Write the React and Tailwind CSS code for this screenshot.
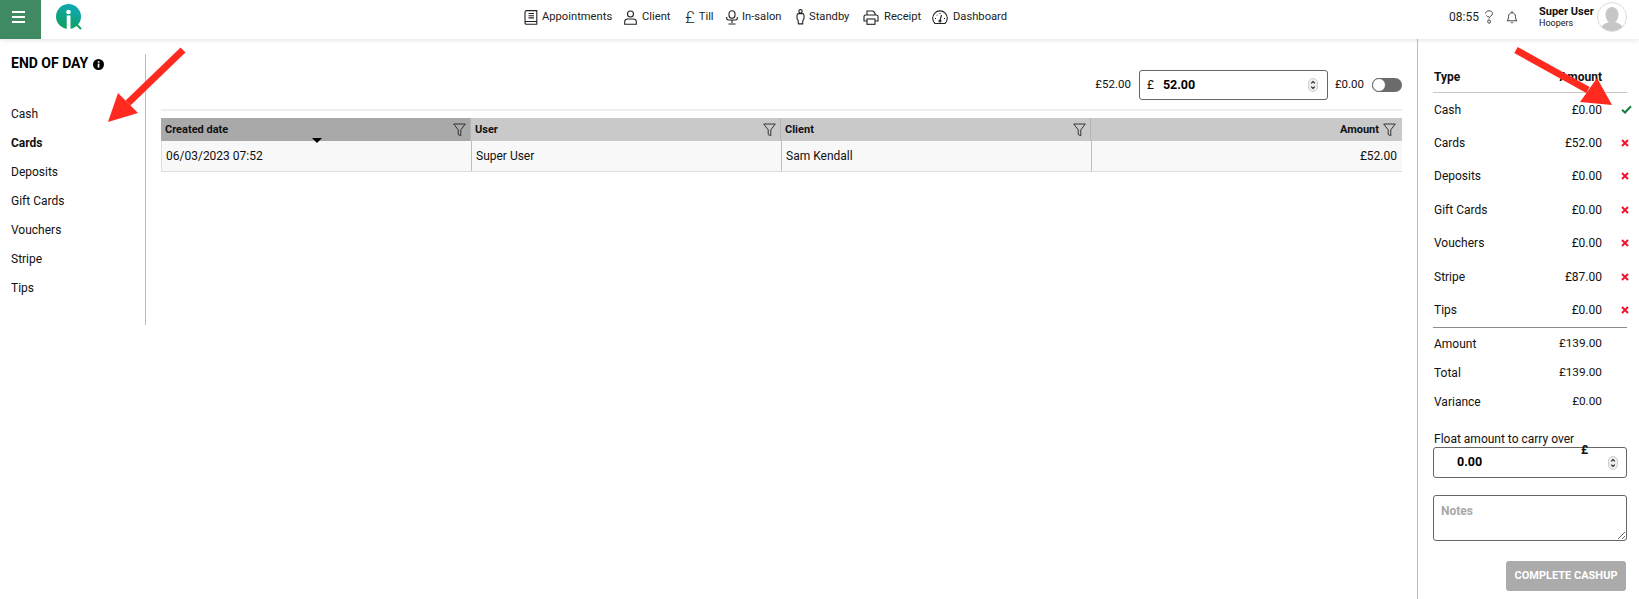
import React from "react";

const Ic = ({ w = 14, h = 14, vb = "0 0 16 16", children, className = "" }) => (
  <svg width={w} height={h} viewBox={vb} fill="none" stroke="currentColor" strokeWidth="1.1" className={`shrink-0 ${className}`}>
    {children}
  </svg>
);

const Book = () => (
  <Ic w={14} h={15} vb="0 0 14 15">
    <path d="M1 12.500V2.200A1.600 1.600 0 0 1 2.600.6h10.200v10.900H2.400A1.400 1.400 0 0 0 1 12.900a1.400 1.400 0 0 0 1.400 1.400h10.400v-2.800" />
    <path d="M4.500 3.500h5.500M4.500 5.700h5.500M4.500 7.900h5.500" />
  </Ic>
);
const UserIc = () => (
  <Ic w={13} h={15} vb="0 0 13 15">
    <circle cx="6.500" cy="4" r="3" />
    <path d="M.7 14.200v-2.400c0-1.800 1.300-2.800 3-2.800h5.600c1.700 0 3 1 3 2.800v2.400z" />
  </Ic>
);
const Seat = () => (
  <Ic w={12} h={15} vb="0 0 12 15">
    <rect x="3" y=".7" width="6" height="7.600" rx="3" />
    <path d="M.7 7v1.300c0 1 .8 1.700 1.800 1.700h7c1 0 1.800-.7 1.800-1.700V7M6 10v3M2.500 14h7" />
  </Ic>
);
const Person = () => (
  <Ic w={9} h={16} vb="0 0 9 16">
    <circle cx="4.500" cy="2.300" r="1.700" />
    <path d="M2.700 4.600h3.600c1 0 1.700.8 1.700 1.800v2.800c0 1-.5 1.500-1 1.900l-.4 3.800H2.400L2 11.100c-.5-.4-1-.9-1-1.900V6.400c0-1 .7-1.800 1.700-1.800z" />
  </Ic>
);
const Printer = () => (
  <Ic w={16} h={15} vb="0 0 16 15">
    <path d="M4 5V1h6l2 2v2M4 11H1V6.500C1 5.700 1.600 5 2.500 5h11c.9 0 1.500.7 1.500 1.500V11h-3" />
    <rect x="4" y="9" width="8" height="5.300" />
  </Ic>
);
const Gauge = () => (
  <Ic w={16} h={15} vb="0 0 16 15">
    <path d="M3 13.500A7.300 7.300 0 1 1 13 13.500z" />
    <path d="M8 10.500 9.500 5M3 8.500h1M12 8.500h1M4.800 4.800l.6.6M8 3v1" />
    <circle cx="8" cy="11" r="1" />
  </Ic>
);
const Filter = ({ className = "" }) => (
  <Ic w={13} h={14} vb="0 0 13 14" className={className}>
    <path d="M.7 1h11.600L7.800 6.800v6L5.200 11.500V6.800z" strokeWidth="0.9" />
  </Ic>
);
const Spin = () => (
  <svg width="10" height="14" viewBox="0 0 10 14" fill="none" className="shrink-0">
    <rect x=".5" y=".5" width="9" height="13" rx="4.500" fill="#ededed" stroke="#cfcfcf" />
    <path d="M3.200 5.300 5 3.500l1.800 1.800M3.200 8.700 5 10.500l1.800-1.800" stroke="#222" strokeWidth="1.100" />
  </svg>
);
const Cross = () => (
  <svg width="8" height="8" viewBox="0 0 8 8" className="shrink-0">
    <path d="M1 1l6 6M7 1 1 7" stroke="#f0142f" strokeWidth="2" />
  </svg>
);
const Check = () => (
  <svg width="11" height="9" viewBox="0 0 11 9" fill="none" className="shrink-0">
    <path d="M1 4.800 4 7.500 10 1.200" stroke="#15803d" strokeWidth="2" />
  </svg>
);

const navItems = [
  ["Appointments", <Book />, "gap-1", "w-[85px]"],
  ["Client", <UserIc />, "gap-[5px]", "w-[46px]"],
  ["Till", <span className="text-[17px] font-light leading-none w-[10px]">£</span>, "gap-1", "w-[26px]"],
  ["In-salon", <Seat />, "gap-1", "w-[55px]"],
  ["Standby", <Person />, "gap-1", "w-[52px]"],
  ["Receipt", <Printer />, "gap-[5px]", "w-[54px]"],
  ["Dashboard", <Gauge />, "gap-[5px]", "w-[73px]"],
];

const side = ["Cash", "Cards", "Deposits", "Gift Cards", "Vouchers", "Stripe", "Tips"];
const totals = [
  ["Cash", "£0.00", true],
  ["Cards", "£52.00"],
  ["Deposits", "£0.00"],
  ["Gift Cards", "£0.00"],
  ["Vouchers", "£0.00"],
  ["Stripe", "£87.00"],
  ["Tips", "£0.00"],
];

const Head = ({ label, dark, right, sort }) => (
  <div className={`relative flex-1 h-[23px] flex items-center pt-[1px] pl-[4px] border-r border-[#b5b5b5] last:border-r-0 ${dark ? "bg-[#a9a9a9]" : "bg-[#c9c9c9]"} ${right ? "justify-end gap-[4px] pr-[6px]" : "justify-between pr-[4px]"}`}>
    <span className="text-[11px] font-bold">{label}</span>
    <Filter className="text-[#222]" />
    {sort && <span className="absolute left-[151px] bottom-[-2px] w-0 h-0 border-x-[5px] border-x-transparent border-t-[5px] border-t-black" />}
  </div>
);

export default function App() {
  return (
    <div className="relative w-[1639px] h-[599px] overflow-hidden bg-white text-[#111] font-['Roboto',sans-serif] text-[12px]">
      <header className="relative z-10 h-[39px] flex items-center bg-white shadow-[0_1px_5px_rgba(0,0,0,0.12)]">
        <div className="w-[41px] h-full bg-[#3f8a63] flex flex-col items-center justify-center gap-[3px] pb-[6px] pr-[4px]">
          <span className="w-[13px] h-[2px] bg-white" />
          <span className="w-[13px] h-[2px] bg-white" />
          <span className="w-[13px] h-[2px] bg-white" />
        </div>
        <svg width="26" height="26" viewBox="0 0 26 26" className="ml-[15px] mb-[5px] shrink-0">
          <defs>
            <linearGradient id="lg" x1="0.7" y1="0" x2="0.3" y2="1">
              <stop offset="0" stopColor="#10a9bb" />
              <stop offset="1" stopColor="#0d9f5a" />
            </linearGradient>
          </defs>
          <circle cx="12.500" cy="12.500" r="12.500" fill="url(#lg)" />
          <circle cx="12.500" cy="8" r="2.300" fill="#fff" />
          <rect x="10.700" y="11.500" width="3.800" height="14" fill="#fff" />
          <path d="M20 20l5 5" stroke="#0d9f5a" strokeWidth="2" />
        </svg>
        <nav className="ml-[442px] mb-[4px] flex items-center gap-[15px] w-[482px]">
          {navItems.map(([label, icon, gap, width]) => (
            <div key={label} className={`flex items-center ${gap} ${width} shrink-0 text-[11.200px] text-[#222] whitespace-nowrap`}>
              {icon}
              <span>{label}</span>
            </div>
          ))}
        </nav>
        <div className="ml-auto mb-[6px] flex items-center pr-[12px]">
          <span className="text-[12px] text-[#222]">08:55</span>
          <Ic w={10} h={14} vb="0 0 10 14" className="ml-[5px] text-[#333]">
            <path d="M1.500 3.500C1.500 1.800 3 .8 5 .8s3.500 1 3.500 2.700c0 2.500-3.500 2.700-3.500 5M2.500 5.500c.5 1 1.500 1.300 2.500 1M3.800 11.500a1.300 1.300 0 1 0 2.500 0 1.300 1.300 0 1 0-2.500 0z" strokeWidth="0.9" />
          </Ic>
          <Ic w={12} h={14} vb="0 0 12 14" className="ml-[12px] text-[#333]">
            <path d="M1 10.800h10c-1.200-1-1.500-2.300-1.500-4.300 0-2-1.300-3.700-3.500-3.700S2.500 4.500 2.500 6.500c0 2-.3 3.300-1.500 4.300zM5 12.300a1.100 1.100 0 0 0 2 0M6 1v1.800" strokeWidth="0.9" />
          </Ic>
          <div className="ml-[21px] w-[54px] flex flex-col">
            <span className="text-[11px] font-bold leading-[13px] whitespace-nowrap">Super User</span>
            <span className="text-[9px] leading-[11px]">Hoopers</span>
          </div>
          <div className="ml-[4px] w-[30px] h-[30px] rounded-full border border-[#ddd] overflow-hidden bg-white">
            <svg width="28" height="28" viewBox="0 0 28 28">
              <ellipse cx="14" cy="12" rx="6.500" ry="8" fill="#c6c6c6" />
              <path d="M2 28c0-6 6-8 9-9h6c3 1 9 3 9 9z" fill="#c6c6c6" />
            </svg>
          </div>
        </div>
      </header>

      <div className="flex h-[560px]">
        <aside className="w-[146px] h-[271px] mt-[15px] border-r border-[#bdbdbd] pl-[11px] shrink-0">
          <div className="flex items-center gap-[5px] h-[18px]">
            <span className="text-[14px] font-bold text-black">END OF DAY</span>
            <svg width="11" height="11" viewBox="0 0 11 11" className="mt-[2px]">
              <circle cx="5.500" cy="5.500" r="5.500" fill="#000" />
              <rect x="4.700" y="4.600" width="1.700" height="4" fill="#fff" />
              <rect x="4.700" y="2.200" width="1.700" height="1.500" fill="#fff" />
            </svg>
          </div>
          <ul className="mt-[27px] flex flex-col">
            {side.map((s) => (
              <li key={s} className={`h-[29px] flex items-center text-[12px] ${s === "Cards" ? "font-bold" : ""}`}>{s}</li>
            ))}
          </ul>
        </aside>

        <main className="w-[1241px] ml-[15px] shrink-0 flex flex-col">
          <div className="flex items-center justify-end mt-[31px] h-[30px] text-[11.500px]">
            <span>£52.00</span>
            <div className="ml-[8px] w-[189px] h-[30px] border border-[#666] rounded-[3px] flex items-center pl-[7px] pr-[9px]">
              <span className="text-[12px]">£</span>
              <span className="ml-[9px] text-[12.500px] font-bold text-black">52.00</span>
              <span className="ml-auto"><Spin /></span>
            </div>
            <span className="ml-[7px]">£0.00</span>
            <div className="ml-[8px] w-[30px] h-[14px] rounded-full bg-[#6b6b6b] relative">
              <span className="absolute left-0 top-0 w-[14px] h-[14px] rounded-full bg-white border border-[#6b6b6b]" />
            </div>
          </div>
          <div className="mt-[9px] h-[2px] bg-[#eeeeee]" />
          <div className="mt-[7px]">
            <div className="flex">
              <Head label="Created date" dark sort />
              <Head label="User" />
              <Head label="Client" />
              <Head label="Amount" right />
            </div>
            <div className="flex h-[31px] bg-[#f8f8f8] border-b border-[#dedede] border-l border-l-[#dedede] text-[12px]">
              <div className="flex-1 flex items-center pl-[4px] border-r border-[#bdbdbd]">06/03/2023 07:52</div>
              <div className="flex-1 flex items-center pl-[4px] border-r border-[#bdbdbd]">Super User</div>
              <div className="flex-1 flex items-center pl-[4px] border-r border-[#bdbdbd]">Sam Kendall</div>
              <div className="flex-1 flex items-center justify-end pr-[5px]">£52.00</div>
            </div>
          </div>
        </main>

        <aside className="ml-[15px] w-[222px] shrink-0 border-l border-[#bdbdbd] pl-[15px] text-[12px] flex flex-col">
          <div className="w-[194px] h-[30px] mt-[24px] flex items-center border-b border-[#c8c8c8] font-bold pb-[1px]">
            <span className="text-[12px] pl-px">Type</span>
            <span className="ml-auto mr-[25px] text-[12px]">Amount</span>
          </div>
          <div className="w-[194px] border-b border-[#8c8c8c] h-[235px] flex flex-col">
            {totals.map(([t, a, ok]) => (
              <div key={t} className="h-[33.400px] flex items-center">
                <span className="pl-px">{t}</span>
                <span className="ml-auto">{a}</span>
                <span className="w-[25px] shrink-0 pl-[19px] flex items-center">{ok ? <Check /> : <Cross />}</span>
              </div>
            ))}
          </div>
          <div className="w-[169px] flex flex-col text-[11.800px]">
            <div className="h-[29px] mt-[1px] flex items-center justify-between"><span className="text-[12px] pl-px">Amount</span><span>£139.00</span></div>
            <div className="h-[29px] flex items-center justify-between"><span className="text-[12px] pl-px">Total</span><span>£139.00</span></div>
            <div className="h-[30px] flex items-center justify-between"><span className="text-[12px] pl-px">Variance</span><span>£0.00</span></div>
          </div>
          <div className="mt-[15px] h-[15px] leading-[15px] whitespace-nowrap pl-px">Float amount to carry over</div>
          <div className="relative w-[194px] h-[31px] border border-[#666] rounded-[3px] flex items-center pl-[23px] pr-[8px]">
            <span className="text-[12.500px] font-bold text-black">0.00</span>
            <span className="absolute left-[147px] top-[-7px] text-[12px] font-bold">£</span>
            <span className="ml-auto"><Spin /></span>
          </div>
          <textarea
            placeholder="Notes"
            readOnly
            className="mt-[17px] w-[194px] h-[46px] border border-[#666] rounded-[3px] px-[7px] py-[6px] text-[12px] font-bold placeholder:text-[#a8a8a8] outline-none"
          />
          <div className="mt-[20px] w-[194px] flex justify-end">
            <button className="w-[120px] h-[30px] rounded-[3px] bg-[#ababab] text-white text-[11px] font-bold mr-px">COMPLETE CASHUP</button>
          </div>
        </aside>
      </div>

      <svg className="absolute inset-0 pointer-events-none z-20" width="1639" height="599" viewBox="0 0 1639 599">
        <path d="M183 50 128 103" stroke="#ff2a1f" strokeWidth="7" />
        <path d="M108 122 118 93 138 113z" fill="#ff2a1f" />
        <path d="M1516 50 1588 90" stroke="#ff2a1f" strokeWidth="7" />
        <path d="M1612 105 1580 102 1597 78z" fill="#ff2a1f" />
      </svg>
    </div>
  );
}
